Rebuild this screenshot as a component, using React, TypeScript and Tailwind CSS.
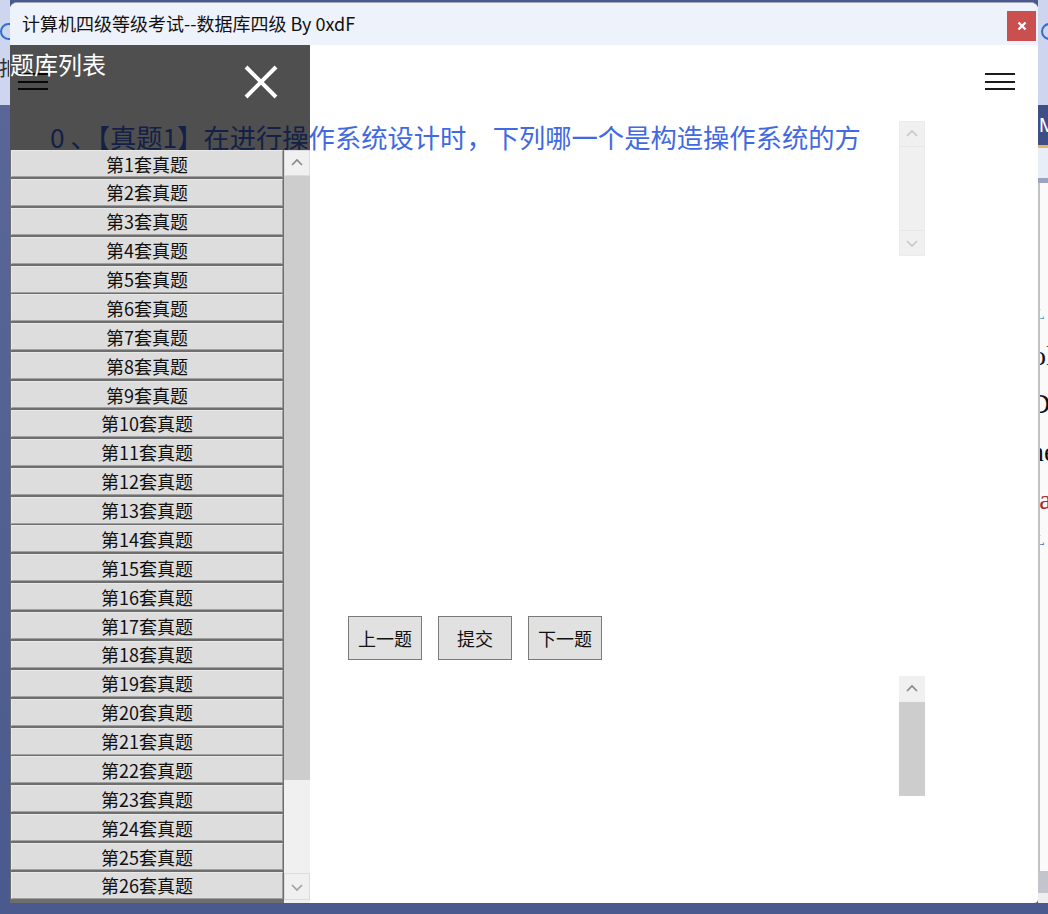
import React from 'react';

const sets = Array.from({ length: 26 }, (_, i) => `第${i + 1}套真题`);

const cjk = { fontFamily: '"Noto Sans CJK SC", "Noto Sans", sans-serif' };

function Chevron({ down, className }: { down?: boolean; className: string }) {
  return (
    <svg width="24" height="24" viewBox="0 0 24 24" className={className}>
      <polyline
        points={down ? '7,10 12,15 17,10' : '7,14 12,9 17,14'}
        fill="none"
        strokeWidth="1.6"
      />
    </svg>
  );
}

function Hamburger() {
  return (
    <div className="flex flex-col gap-[5.5px] w-[30px]">
      <div className="h-[2px] bg-[#1b1b1b]" />
      <div className="h-[2px] bg-[#1b1b1b]" />
      <div className="h-[2px] bg-[#1b1b1b]" />
    </div>
  );
}

function LeftStrip() {
  return (
    <div className="w-[10px] h-full flex flex-col overflow-hidden">
      <div className="h-[105px] bg-[#cdd6ee] relative">
        <div className="absolute left-[0px] top-[23px] w-[17px] h-[17px] rounded-full border-2 border-[#2f6fd0]" />
        <div className="absolute left-0 top-[58px] w-[10px] h-[22px] overflow-hidden">
          <span className="block w-[10px] overflow-hidden whitespace-nowrap text-[20px] leading-none text-[#333] ml-[-1px]" style={cjk}>扣</span>
        </div>
      </div>
      <div className="flex-1 bg-gradient-to-b from-[#5a6699] to-[#4b5a8e]" />
    </div>
  );
}

function RightStrip() {
  return (
    <div className="w-[10px] h-full flex flex-col overflow-hidden">
      <div className="h-[105px] bg-[#cdd6ee] relative">
        <div className="absolute left-[3px] top-[23px] w-[17px] h-[17px] rounded-full border-2 border-[#2f6fd0]" />
      </div>
      <div className="h-[40px] bg-[#3f4f86] text-white text-[20px] leading-[40px] pl-[1px] font-['Liberation_Sans']">M</div>
      <div className="h-[3px] bg-[#e8b563]" />
      <div className="h-[30px] bg-[#e8eef8]" />
      <div className="h-[5px] bg-[#9aa3c0]" />
      <div className="flex-1 flex">
        <div className="w-[2px] bg-[#c2c2c2]" />
        <div className="flex-1 bg-[#fafafa] font-['Liberation_Serif'] leading-none pt-[125px] flex flex-col gap-[20px] overflow-hidden">
          <span className="text-[14px] text-[#2a8a9a] ml-[-4px]">L</span>
          <span className="text-[28px] text-[#111] ml-[-8px]">ol</span>
          <span className="text-[28px] text-[#111] ml-[-10px]">Da</span>
          <span className="text-[28px] text-[#111] ml-[-10px]">ne</span>
          <span className="text-[28px] text-[#a52a2a] ml-[-10px]">ra</span>
          <span className="text-[14px] text-[#2a5aaa] ml-[-4px]">L</span>
        </div>
      </div>
      <div className="h-[22px] bg-[#c3c5cd]" />
      <div className="h-[10px] bg-[#eeeeee]" />
      <div className="h-[11px] bg-[#4b5a8e]" />
    </div>
  );
}

export default function App() {
  return (
    <div className="w-[1048px] h-[914px] bg-[#4b5a8e] flex overflow-hidden" style={cjk}>
      <LeftStrip />

      {/* window */}
      <div className="w-[1028px] h-[901px] mt-[2px] flex flex-col rounded-t-[7px] rounded-br-[4px] overflow-hidden border-t border-[#a3a8b8] bg-white">
        <div className="h-[42px] bg-[#eef2fa] flex items-start justify-between pl-[12px] pr-[2px]">
          <span className="text-[18px] text-[#111] leading-none mt-[11px]">计算机四级等级考试--数据库四级 By 0xdF</span>
          <button className="w-[29px] h-[30px] mt-[8px] bg-[#c9504f] flex items-center justify-center">
            <svg width="10" height="10" viewBox="0 0 10 10">
              <path d="M1.5 1.5 L8.5 8.5 M8.5 1.5 L1.5 8.5" stroke="white" strokeWidth="2.4" />
            </svg>
          </button>
        </div>

        <div className="flex-1 relative">
          <div className="flex justify-between pl-[8px] pr-[23px] pt-[28px]">
            <Hamburger />
            <Hamburger />
          </div>

          <div className="flex ml-[40px] mt-[31px] w-[875px] h-[135px]">
            <div className="flex-1 overflow-hidden whitespace-nowrap text-[26.3px] leading-none pt-[3px] text-[#4169e1]">
              0 、【真题1】在进行操作系统设计时，下列哪一个是构造操作系统的方
            </div>
            <div className="w-[26px] h-[135px] bg-[#f0f0f0] flex flex-col justify-between border border-[#ececec]">
              <div className="h-[25px] flex items-center justify-center border-b border-[#e6e6e6]">
                <Chevron className="stroke-[#c8c8c8]" />
              </div>
              <div className="h-[25px] flex items-center justify-center border-t border-[#e6e6e6]">
                <Chevron down className="stroke-[#c8c8c8]" />
              </div>
            </div>
          </div>

          <div className="flex gap-[16px] ml-[338px] mt-[360px]">
            {['上一题', '提交', '下一题'].map((t) => (
              <button
                key={t}
                className="w-[74px] h-[44px] bg-[#e1e1e1] border border-[#7a7a7a] text-[18px] text-[#111] leading-none"
              >
                {t}
              </button>
            ))}
          </div>

          <div className="ml-[889px] mt-[16px] w-[26px] h-[120px] flex flex-col bg-[#cdcdcd]">
            <div className="h-[26px] bg-[#f0f0f0] flex items-center justify-center">
              <Chevron className="stroke-[#888888]" />
            </div>
          </div>

          {/* drawer */}
          <div className="absolute inset-y-0 left-0 w-[300px] bg-[rgba(0,0,0,0.69)] flex flex-col">
            <div className="h-[105px] flex items-start shrink-0">
              <span className="text-[24px] text-white leading-none mt-[7px]">题库列表</span>
              <svg width="36" height="36" viewBox="0 0 36 36" className="ml-auto mr-[31px] mt-[19px]">
                <path d="M3 3 L33 33 M33 3 L3 33" stroke="white" strokeWidth="4" />
              </svg>
            </div>
            <div className="flex-1 flex overflow-hidden">
              <div className="w-[274px] bg-[#6e6e6e] px-[1px] flex flex-col gap-[1.88px] overflow-hidden">
                {sets.map((s) => (
                  <button
                    key={s}
                    className="h-[27px] shrink-0 bg-[#dddddd] border border-t-[#e9e9e9] border-l-[#e9e9e9] border-r-[#a0a0a0] border-b-[#a0a0a0] text-[18px] text-[#111] leading-none"
                  >
                    {s}
                  </button>
                ))}
              </div>
              <div className="w-[26px] flex flex-col bg-[#f0f0f0]">
                <div className="h-[26px] flex items-center justify-center border border-[#dcdcdc] bg-[#f0f0f0]">
                  <Chevron className="stroke-[#888888]" />
                </div>
                <div className="h-[604px] bg-[#cdcdcd]" />
                <div className="flex-1" />
                <div className="h-[27px] mb-[3px] flex items-center justify-center border border-[#dcdcdc]">
                  <Chevron down className="stroke-[#a0a0a0]" />
                </div>
              </div>
            </div>
          </div>
        </div>
      </div>

      <RightStrip />
    </div>
  );
}
